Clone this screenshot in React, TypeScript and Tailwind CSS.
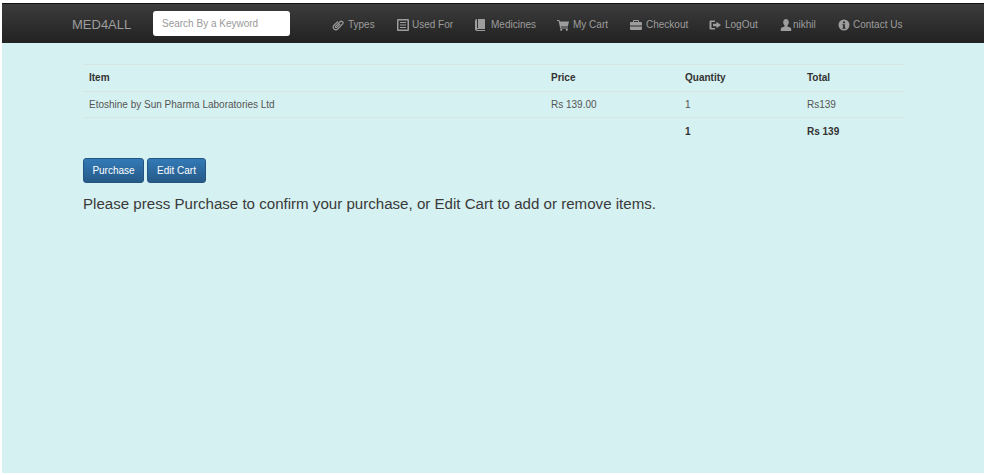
import { ReactNode } from "react";

const Clip = () => (
  <svg width="12" height="12" viewBox="0 0 16 16" fill="none" stroke="currentColor" strokeWidth="1.500">
    <g transform="rotate(45 8 8)">
      <path d="M4.500 4.500v7.500a3.500 3.500 0 0 0 7 0V3a2.300 2.300 0 0 0-4.600 0v8.500a1.100 1.100 0 0 0 2.200 0V5" />
    </g>
  </svg>
);
const ListAlt = () => (
  <svg width="12" height="12" viewBox="0 0 12 12" fill="currentColor">
    <path fillRule="evenodd" d="M1 0h10a1 1 0 0 1 1 1v10a1 1 0 0 1-1 1H1a1 1 0 0 1-1-1V1a1 1 0 0 1 1-1Zm.5 1.500v9h9v-9h-9ZM3 3h6v1H3V3Zm0 2.500h6v1H3v-1ZM3 8h6v1H3V8Z" />
  </svg>
);
const Book = () => (
  <svg width="11" height="12" viewBox="0 0 11 12" fill="currentColor">
    <path d="M2 0h8v10H2.500a.5.500 0 0 0 0 1H10v1H2a2 2 0 0 1-2-2V2a2 2 0 0 1 2-2Z" />
    <rect x="2" y="0" width="1" height="9" fill="#333" />
  </svg>
);
const Cart = () => (
  <svg width="12" height="12" viewBox="0 0 12 12" fill="currentColor">
    <path d="M0 1h2.400l.4 1.500H12l-1.200 5H3.900l.2 1H11v1H3.200L1.600 2H0V1Z" />
    <circle cx="4.200" cy="10.800" r="1.100" />
    <circle cx="9.800" cy="10.800" r="1.100" />
  </svg>
);
const Briefcase = () => (
  <svg width="12" height="12" viewBox="0 0 12 12" fill="currentColor">
    <path fillRule="evenodd" d="M4 1h4a1 1 0 0 1 1 1v1h2a1 1 0 0 1 1 1v2.500H0V4a1 1 0 0 1 1-1h2V2a1 1 0 0 1 1-1Zm0 1v1h4V2H4ZM0 7.500h12V10a1 1 0 0 1-1 1H1a1 1 0 0 1-1-1V7.500Z" />
  </svg>
);
const LogOut = () => (
  <svg width="12" height="12" viewBox="0 0 12 12" fill="currentColor">
    <path d="M1.500 1.500H6v1.500H2.500v6H6v1.500H1.500A1 1 0 0 1 .5 9.500v-7a1 1 0 0 1 1-1Z" />
    <path d="M7.500 2.800 12 6l-4.500 3.200V7.300H4V4.700h3.500V2.800Z" />
  </svg>
);
const User = () => (
  <svg width="12" height="12" viewBox="0 0 12 12" fill="currentColor">
    <path d="M6 0c1.700 0 2.800 1.300 2.800 3.200 0 1.300-.6 2.500-1.300 3.100v1.100c1.900.5 3.700 1.100 3.700 2.200V12H.8V9.600c0-1.100 1.800-1.700 3.700-2.200V6.300C3.800 5.700 3.200 4.500 3.200 3.200 3.200 1.300 4.300 0 6 0Z" />
  </svg>
);
const Info = () => (
  <svg width="12" height="12" viewBox="0 0 12 12" fill="currentColor">
    <path fillRule="evenodd" d="M6 .5a5.500 5.500 0 1 1 0 11 5.500 5.500 0 0 1 0-11ZM5 2.500v1.700h2V2.500H5Zm-.6 2.700v1h.7v2.600h-.7v1h3.200v-1h-.7V5.200H4.400Z" />
  </svg>
);

const links: { icon: ReactNode; label: string; w: string; gap: string }[] = [
  { icon: <Clip />, label: "Types", w: "w-[65px]", gap: "gap-[4px]" },
  { icon: <ListAlt />, label: "Used For", w: "w-[78px]", gap: "gap-[3px]" },
  { icon: <Book />, label: "Medicines", w: "w-[82px]", gap: "gap-[5px]" },
  { icon: <Cart />, label: "My Cart", w: "w-[73px]", gap: "gap-[4px]" },
  { icon: <Briefcase />, label: "Checkout", w: "w-[79px]", gap: "gap-[4px]" },
  { icon: <LogOut />, label: "LogOut", w: "w-[71px]", gap: "gap-[4px]" },
  { icon: <User />, label: "nikhil", w: "w-[58px]", gap: "gap-[1px]" },
  { icon: <Info />, label: "Contact Us", w: "w-auto", gap: "gap-[3px]" },
];

const rows = "grid grid-cols-[462px_134px_122px_1fr] border-t border-[#d6e6e4] px-[6px] items-center";

export default function App() {
  return (
    <div className="h-[475px] w-[986px] overflow-hidden bg-white px-[2px] pt-[3px] font-['Liberation_Sans',Arial,sans-serif] text-[10px] text-[#333]">
      <nav className="flex h-[40px] items-center border-t border-[#111] bg-gradient-to-b from-[#3c3c3c] to-[#222222] pl-[70px] pt-[2px] text-[#9d9d9d]">
        <span className="w-[81px] text-[13px]">MED4ALL</span>
        <div className="mb-[2px] flex h-[25px] w-[137px] items-center rounded-[3px] bg-white pl-[9px] text-[#999]">
          Search By a Keyword
        </div>
        <div className="ml-[42px] flex items-center">
          {links.map((l) => (
            <div key={l.label} className={`flex items-center ${l.w} ${l.gap}`}>
              {l.icon}
              <span>{l.label}</span>
            </div>
          ))}
        </div>
      </nav>
      <main className="h-[430px] bg-[#d6f1f1] pl-[81px] pr-[79px] pt-[21px]">
        <div>
          <div className={`${rows} h-[27px] pb-[2px] font-bold`}>
            <span>Item</span>
            <span>Price</span>
            <span>Quantity</span>
            <span>Total</span>
          </div>
          <div className={`${rows} h-[26px] text-[#555]`}>
            <span>Etoshine by Sun Pharma Laboratories Ltd</span>
            <span>Rs 139.00</span>
            <span>1</span>
            <span>Rs139</span>
          </div>
          <div className={`${rows} h-[28px] font-bold`}>
            <span />
            <span />
            <span>1</span>
            <span>Rs 139</span>
          </div>
        </div>
        <div className="mt-[13px] flex gap-[3px] text-white">
          <button className="h-[25px] w-[61px] rounded-[3px] border border-[#245580] bg-gradient-to-b from-[#337ab7] to-[#265a88]">
            Purchase
          </button>
          <button className="h-[25px] w-[59px] rounded-[3px] border border-[#245580] bg-gradient-to-b from-[#337ab7] to-[#265a88]">
            Edit Cart
          </button>
        </div>
        <p className="mt-[11px] text-[15.100px] leading-[20px] text-[#3a3a3a]">
          Please press Purchase to confirm your purchase, or Edit Cart to add or remove items.
        </p>
      </main>
    </div>
  );
}
